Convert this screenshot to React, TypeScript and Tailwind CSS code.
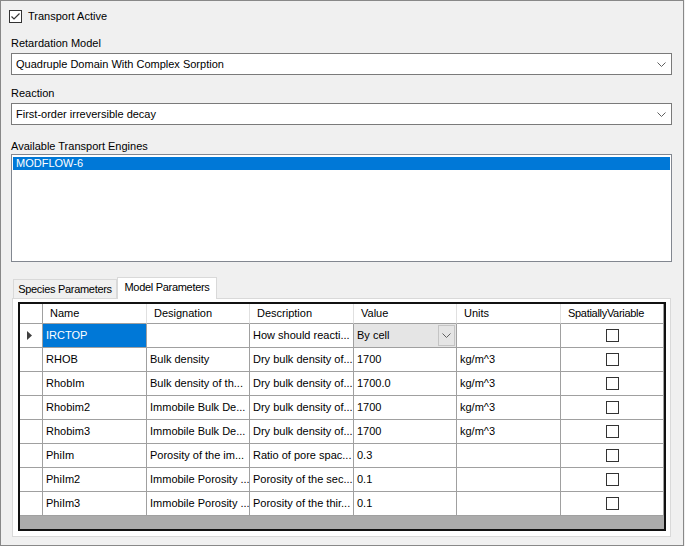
import React from "react";

type Row = {
  name: string;
  designation: string;
  description: string;
  value: string;
  units: string;
  combo?: boolean;
};

const rows: Row[] = [
  { name: "IRCTOP", designation: "", description: "How should reacti...", value: "By cell", units: "", combo: true },
  { name: "RHOB", designation: "Bulk density", description: "Dry bulk density of...", value: "1700", units: "kg/m^3" },
  { name: "RhobIm", designation: "Bulk density of th...", description: "Dry bulk density of...", value: "1700.0", units: "kg/m^3" },
  { name: "Rhobim2", designation: "Immobile Bulk De...", description: "Dry bulk density of...", value: "1700", units: "kg/m^3" },
  { name: "Rhobim3", designation: "Immobile Bulk De...", description: "Dry bulk density of...", value: "1700", units: "kg/m^3" },
  { name: "PhiIm", designation: "Porosity of the im...", description: "Ratio of pore spac...", value: "0.3", units: "" },
  { name: "PhiIm2", designation: "Immobile Porosity ...", description: "Porosity of the sec...", value: "0.1", units: "" },
  { name: "PhiIm3", designation: "Immobile Porosity ...", description: "Porosity of the thir...", value: "0.1", units: "" },
];

const headers = ["Name", "Designation", "Description", "Value", "Units", "SpatiallyVariable"];

function Chevron() {
  return (
    <svg width="9" height="5" viewBox="0 0 9 5" className="block">
      <polyline points="0.5,0.5 4.5,4.5 8.5,0.5" fill="none" stroke="#606060" strokeWidth="1" />
    </svg>
  );
}

function Combo({ text }: { text: string }) {
  return (
    <div className="flex h-[22px] w-[661px] items-center justify-between border border-[#7a7a7a] bg-white pl-[4px] pr-[5px]">
      <span>{text}</span>
      <Chevron />
    </div>
  );
}

function Box() {
  return <div className="h-[13px] w-[13px] border border-[#333333] bg-white" />;
}

function Cell({ children, className = "" }: { children?: React.ReactNode; className?: string }) {
  return (
    <div className={`flex items-center overflow-hidden whitespace-nowrap border-b border-r border-[#a0a0a0] pl-[3px] ${className}`}>
      {children}
    </div>
  );
}

export default function App() {
  return (
    <div className="h-[546px] w-[685px] bg-[#f0f0f0] font-['Liberation_Sans',Arial,sans-serif] text-[11px] text-black">
      <div className="flex h-[546px] w-[684px] flex-col border border-[#888888] pl-[10px] pr-[11px] pt-[9px]">
        {/* Transport Active */}
        <div className="ml-[-2px] flex h-[13px] items-center gap-[6px]">
          <div className="relative h-[13px] w-[13px] border border-[#333333] bg-white">
            <svg width="11" height="11" viewBox="0 0 11 11" className="absolute left-0 top-0">
              <polyline points="1.5,5.5 4,8 9.5,2.5" fill="none" stroke="#333333" strokeWidth="1.2" />
            </svg>
          </div>
          <span>Transport Active</span>
        </div>

        <div className="mt-[13px] h-[14px] leading-[14px]">Retardation Model</div>
        <div className="mt-[3px]">
          <Combo text="Quadruple Domain With Complex Sorption" />
        </div>

        <div className="mt-[11px] h-[14px] leading-[14px]">Reaction</div>
        <div className="mt-[3px]">
          <Combo text="First-order irreversible decay" />
        </div>

        <div className="mt-[14px] h-[14px] leading-[14px]">Available Transport Engines</div>
        <div className="mt-[1px] h-[108px] w-[661px] border border-[#828790] bg-white pl-[1px] pr-[1px] pt-[2px]">
          <div className="flex h-[13px] items-center bg-[#0078d7] pl-[3px] text-white">MODFLOW-6</div>
        </div>

        {/* Tabs */}
        <div className="ml-[2px] mt-[15px] flex h-[21px] items-end tracking-[-0.3px]">
          <div className="flex h-[19px] w-[104px] items-center justify-center border border-b-0 border-[#d9d9d9] bg-[#f0f0f0]">
            Species Parameters
          </div>
          <div className="relative z-10 -mb-px flex h-[22px] w-[100px] items-center justify-center border border-b-0 border-[#d9d9d9] bg-white pb-[2px]">
            Model Parameters
          </div>
        </div>
        <div className="ml-[1px] h-[239px] w-[659px] border border-[#d9d9d9] bg-white pl-[5px] pt-[3px]">
          <div className="flex h-[229px] w-[648px] flex-col border-2 border-[#111111] bg-white">
            <div className="grid grid-cols-[23px_104px_103px_104px_103px_104px_103px]">
              {/* header */}
              <div className="h-[20px] border-b border-r border-[#a0a0a0]" />
              {headers.map((h, i) => (
                <div
                  key={h}
                  className={`flex h-[20px] items-center whitespace-nowrap border-b border-[#a0a0a0] pl-[7px] ${
                    i < headers.length - 1 ? "border-r border-r-[#e0e0e0]" : "border-r border-r-[#a0a0a0] tracking-[-0.3px]"
                  }`}
                >
                  {h}
                </div>
              ))}

              {rows.map((r, idx) => (
                <React.Fragment key={r.name}>
                  <div className="flex h-[24px] items-center justify-center border-b border-r border-[#a0a0a0]">
                    {idx === 0 && (
                      <svg width="5" height="9" viewBox="0 0 5 9" className="ml-[-3px]">
                        <polygon points="0,0 5,4.5 0,9" fill="#404040" />
                      </svg>
                    )}
                  </div>
                  <Cell className={idx === 0 ? "bg-[#0078d7] text-white" : ""}>{r.name}</Cell>
                  <Cell>{r.designation}</Cell>
                  <Cell>{r.description}</Cell>
                  {r.combo ? (
                    <div className="flex h-[24px] items-center justify-between border-b border-r border-[#a0a0a0] bg-[#e5e5e5] pl-[3px] pr-[1px]">
                      <span>{r.value}</span>
                      <div className="flex h-[21px] w-[17px] items-center justify-center border border-[#c4c4c4] bg-[#e5e5e5]">
                        <Chevron />
                      </div>
                    </div>
                  ) : (
                    <Cell>{r.value}</Cell>
                  )}
                  <Cell>{r.units}</Cell>
                  <div className="flex h-[24px] items-center justify-center border-b border-r border-[#a0a0a0]">
                    <Box />
                  </div>
                </React.Fragment>
              ))}
            </div>
            <div className="flex-1 bg-[#ababab]" />
          </div>
        </div>
      </div>
    </div>
  );
}
